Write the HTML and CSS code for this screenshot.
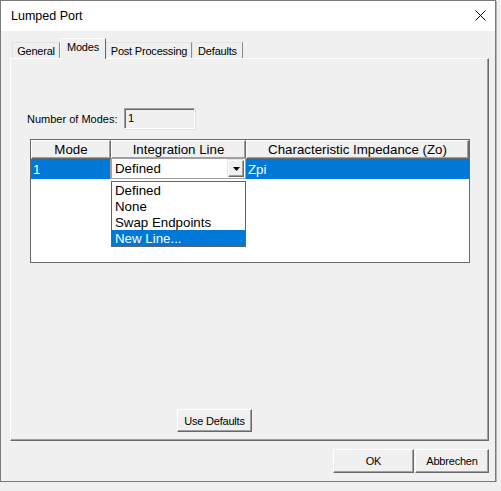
FILE: index.html
```html
<!DOCTYPE html>
<html>
<head>
<meta charset="utf-8">
<link rel="stylesheet" href="styles.css">
</head>
<body>
<div class="dialog">
  <div class="titlebar">
    <span class="title">Lumped Port</span>
    <svg class="close" width="11" height="11" viewBox="0 0 11 11"><path d="M0.5 0.5L10.5 10.5M10.5 0.5L0.5 10.5" stroke="#000" stroke-width="1" fill="none"/></svg>
  </div>
  <div class="tabs">
    <div class="tab tab-general">General</div>
    <div class="tab tab-modes active">Modes</div>
    <div class="tab tab-post">Post Processing</div>
    <div class="tab tab-defaults">Defaults</div>
  </div>
  <div class="panel">
    <div class="modes-row">
      <span class="label">Number of Modes:</span>
      <div class="field">1</div>
    </div>
    <div class="grid">
      <div class="grid-head">
        <div class="hcell c-mode">Mode</div>
        <div class="hcell c-line">Integration Line</div>
        <div class="hcell c-imp">Characteristic Impedance (Zo)</div>
      </div>
      <div class="grid-row">
        <div class="cell c-mode sel">1</div>
        <div class="cell c-line">
          <div class="combo">
            <span class="combo-text">Defined</span>
            <div class="combo-btn"><svg width="7" height="4" viewBox="0 0 7 4"><path d="M0 0H7L3.5 4Z" fill="#000"/></svg></div>
          </div>
        </div>
        <div class="cell c-imp sel">Zpi</div>
      </div>
      <ul class="dropdown">
        <li>Defined</li>
        <li>None</li>
        <li>Swap Endpoints</li>
        <li class="hl">New Line...</li>
      </ul>
    </div>
    <div class="defaults-row">
      <button class="btn btn-defaults">Use Defaults</button>
    </div>
  </div>
  <div class="footer">
    <button class="btn btn-ok">OK</button>
    <button class="btn btn-cancel">Abbrechen</button>
  </div>
</div>
</body>
</html>
```

FILE: styles.css
```css
html, body {
  margin: 0;
  padding: 0;
  background: #f0f0f0;
  font-family: "Liberation Sans", Arial, sans-serif;
  color: #000;
}

.dialog {
  box-sizing: border-box;
  width: 496px;
  height: 482px;
  border: 1px solid #7a7a7a;
  background: #f0f0f0;
  display: flex;
  flex-direction: column;
  box-shadow: 1px 1px 0 #b4b4b4;
}

.titlebar {
  height: 30px;
  background: #ffffff;
  display: flex;
  align-items: center;
  justify-content: space-between;
  padding: 0 9px 0 10px;
  flex: none;
}

.title {
  font-size: 12.5px;
}

.close {
  display: block;
  margin-top: -1px;
}

.tabs {
  display: flex;
  align-items: flex-end;
  height: 20px;
  margin: 7px 0 0 11px;
  position: relative;
  z-index: 2;
  flex: none;
}

.tab {
  box-sizing: border-box;
  height: 16px;
  border-top: 1px solid #e3e3e3;
  border-left: 1px solid #e3e3e3;
  border-right: 1px solid #8a8a8a;
  background: #f0f0f0;
  font-size: 11px;
  line-height: 16px;
  text-align: center;
  white-space: nowrap;
  letter-spacing: -0.2px;
}

.tab-general { width: 48px; }
.tab-post { width: 86px; }
.tab-defaults { width: 51px; }

.tab.active {
  width: 46px;
  height: 21px;
  margin-bottom: -1px;
  border-top: 1px solid #ffffff;
  border-left: 1px solid #ffffff;
  border-right: 1px solid #696969;
  line-height: 17px;
}

.panel {
  box-sizing: border-box;
  margin-left: 9px;
  width: 479px;
  height: 383px;
  border-top: 1px solid #ffffff;
  border-left: 1px solid #ffffff;
  border-right: 1px solid #696969;
  border-bottom: 1px solid #696969;
  box-shadow: inset -1px -1px 0 #a0a0a0;
  flex: none;
}

.modes-row {
  display: flex;
  align-items: center;
  margin-top: 49px;
  padding-left: 16px;
  height: 21px;
  font-size: 11px;
}

.label {
  width: 97px;
  white-space: nowrap;
}

.field {
  box-sizing: border-box;
  width: 71px;
  height: 21px;
  border-top: 1px solid #a0a0a0;
  border-left: 1px solid #a0a0a0;
  border-right: 1px solid #ffffff;
  border-bottom: 1px solid #ffffff;
  box-shadow: inset 1px 1px 0 #696969, 1px 1px 0 #e3e3e3;
  background: #f0f0f0;
  padding-left: 3px;
  line-height: 19px;
}

.grid {
  position: relative;
  box-sizing: border-box;
  margin: 10px 0 0 19px;
  width: 440px;
  height: 124px;
  border: 1px solid #696969;
  background: #ffffff;
  font-size: 13.3px;
}

.grid-head, .grid-row {
  display: flex;
}

.c-mode { width: 80px; }
.c-line { width: 135px; }
.c-imp { width: 223px; }

.hcell {
  box-sizing: border-box;
  height: 19px;
  background: #f0f0f0;
  border-top: 1px solid #ffffff;
  border-left: 1px solid #ffffff;
  border-right: 1px solid #696969;
  border-bottom: 1px solid #696969;
  box-shadow: inset -1px -1px 0 #a0a0a0;
  text-align: center;
  line-height: 17px;
  white-space: nowrap;
}

.cell {
  box-sizing: border-box;
  height: 20px;
  line-height: 21px;
  padding-left: 2px;
  white-space: nowrap;
}

.cell.sel {
  background: #0078d7;
  color: #ffffff;
}

.c-mode.sel {
  border-right: 1px solid #a0a0a0;
}

.c-line.cell {
  padding: 0;
}

.combo {
  box-sizing: border-box;
  height: 21px;
  margin-top: -1px;
  border: 1px solid #a0a0a0;
  background: #ffffff;
  display: flex;
  align-items: center;
  justify-content: space-between;
  padding: 0 1px 0 3px;
}

.combo-text {
  line-height: 20px;
  padding-top: 1px;
}

.combo-btn {
  box-sizing: border-box;
  width: 16px;
  height: 17px;
  background: #f0f0f0;
  border-top: 1px solid #ffffff;
  border-left: 1px solid #ffffff;
  border-right: 1px solid #696969;
  border-bottom: 1px solid #696969;
  box-shadow: inset -1px -1px 0 #a0a0a0, -1px -1px 0 #e3e3e3;
  display: flex;
  align-items: center;
  justify-content: center;
}

.combo-btn svg {
  display: block;
}

.dropdown {
  position: absolute;
  left: 80px;
  top: 41px;
  box-sizing: border-box;
  width: 135px;
  height: 66px;
  margin: 0;
  padding: 0;
  list-style: none;
  border: 1px solid #646464;
  background: #ffffff;
}

.dropdown li {
  height: 16px;
  line-height: 17px;
  padding-left: 3px;
  white-space: nowrap;
}

.dropdown li.hl {
  background: #0078d7;
  color: #ffffff;
}

.defaults-row {
  margin: 146px 0 0 166px;
}

.btn {
  box-sizing: border-box;
  margin: 0;
  padding: 0;
  background: #f0f0f0;
  border-top: 1px solid #ffffff;
  border-left: 1px solid #ffffff;
  border-right: 1px solid #696969;
  border-bottom: 1px solid #696969;
  box-shadow: inset -1px -1px 0 #a0a0a0;
  font-family: "Liberation Sans", Arial, sans-serif;
  font-size: 11px;
  color: #000;
  letter-spacing: -0.2px;
  display: block;
}

.btn-defaults {
  width: 75px;
  height: 23px;
}

.footer {
  display: flex;
  justify-content: flex-end;
  gap: 1px;
  margin-top: 8px;
  padding-right: 6px;
  flex: none;
}

.btn-ok {
  width: 81px;
  height: 24px;
}

.btn-cancel {
  width: 74px;
  height: 24px;
}
```
